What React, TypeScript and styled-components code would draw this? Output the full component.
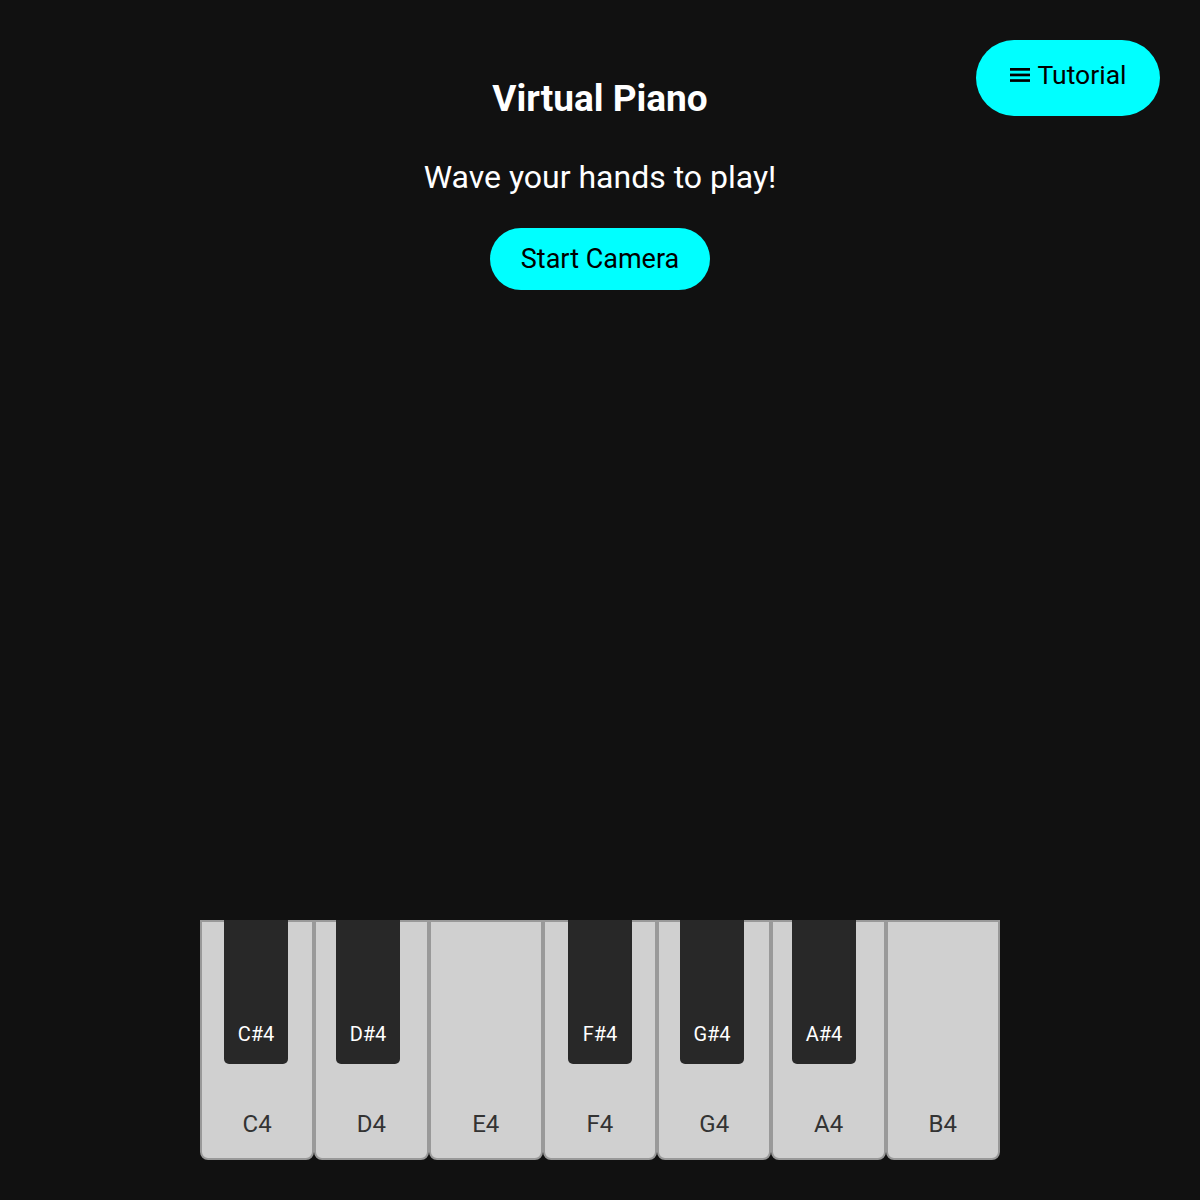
import { FC } from "react";
import styled, { createGlobalStyle } from "styled-components";

const GlobalStyle = createGlobalStyle`
  html, body {
    margin: 0;
    padding: 0;
    background: #111111;
  }
  body {
    font-family: Roboto, "Liberation Sans", Arial, sans-serif;
    color: #ffffff;
  }
`;

const Page = styled.div`
  position: relative;
  height: 100vh;
  box-sizing: border-box;
  display: flex;
  flex-direction: column;
  align-items: center;
  padding: 77px 0 40px;
`;

const Title = styled.h1`
  margin: 0;
  font-size: 37px;
  font-weight: 700;
  line-height: 44px;
`;

const Subtitle = styled.p`
  margin: 37px 0 0;
  font-size: 32px;
  font-weight: 400;
  line-height: 38px;
`;

const PillButton = styled.button`
  border: none;
  outline: none;
  background: #00ffff;
  color: #000000;
  font-family: inherit;
  font-size: 27px;
  font-weight: 400;
  line-height: 32px;
  border-radius: 999px;
  cursor: pointer;
  display: flex;
  align-items: center;
  justify-content: center;
  padding: 0;
`;

const StartButton = styled(PillButton)`
  margin-top: 32px;
  width: 220px;
  height: 62px;
`;

const TutorialButton = styled(PillButton)`
  position: absolute;
  top: 40px;
  right: 40px;
  width: 184px;
  height: 76px;
  gap: 8px;
  padding-bottom: 6px;
  font-size: 26.5px;
`;

const Keyboard = styled.div`
  position: relative;
  margin-top: auto;
  width: 800px;
  height: 240px;
  display: flex;
`;

const WhiteKey = styled.div`
  flex: 1;
  box-sizing: border-box;
  background: #d0d0d0;
  border: 2px solid #999999;
  border-radius: 0 0 8px 8px;
  display: flex;
  align-items: flex-end;
  justify-content: center;
  padding-bottom: 20px;
  font-size: 24px;
  line-height: 28px;
  color: #333333;
`;

const BlackKey = styled.div<{ $left: number }>`
  position: absolute;
  top: 0;
  left: ${(p) => p.$left}%;
  width: 8%;
  height: 60%;
  box-sizing: border-box;
  background: #282828;
  border-radius: 0 0 5px 5px;
  display: flex;
  align-items: flex-end;
  justify-content: center;
  padding-bottom: 18px;
  font-size: 20px;
  line-height: 24px;
  color: #ffffff;
`;

const MenuIcon: FC = () => (
  <svg width="20" height="14" viewBox="0 0 20 14" aria-hidden="true">
    <rect x="0" y="0" width="20" height="2.7" fill="#000" />
    <rect x="0" y="5.6" width="20" height="2.7" fill="#000" />
    <rect x="0" y="11.2" width="20" height="2.7" fill="#000" />
  </svg>
);

const whiteKeys = ["C4", "D4", "E4", "F4", "G4", "A4", "B4"];

const blackKeys = [
  { note: "C#4", left: 3 },
  { note: "D#4", left: 17 },
  { note: "F#4", left: 46 },
  { note: "G#4", left: 60 },
  { note: "A#4", left: 74 },
];

const App = () => {
  return (
    <>
      <GlobalStyle />
      <Page>
        <TutorialButton>
          <MenuIcon />
          Tutorial
        </TutorialButton>
        <Title>Virtual Piano</Title>
        <Subtitle>Wave your hands to play!</Subtitle>
        <StartButton>Start Camera</StartButton>
        <Keyboard>
          {whiteKeys.map((n) => (
            <WhiteKey key={n}>{n}</WhiteKey>
          ))}
          {blackKeys.map((b) => (
            <BlackKey key={b.note} $left={b.left}>
              {b.note}
            </BlackKey>
          ))}
        </Keyboard>
      </Page>
    </>
  );
};

export default App;
